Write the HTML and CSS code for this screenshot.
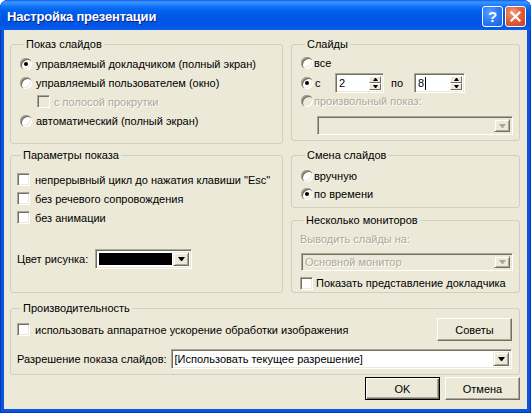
FILE: index.html
```html
<!DOCTYPE html>
<html lang="ru">
<head>
<meta charset="utf-8">
<title>Настройка презентации</title>
<link rel="stylesheet" href="styles.css">
</head>
<body>
<div class="window">
  <header class="titlebar">
    <h1 class="title">Настройка презентации</h1>
    <div class="caption-buttons">
      <span class="cap-btn cap-help">?</span>
      <span class="cap-btn cap-close"><svg width="13" height="13" viewBox="0 0 13 13"><path d="M2.5 2.5 L10.5 10.5 M10.5 2.5 L2.5 10.5" stroke="#fff" stroke-width="2.2" stroke-linecap="square"/></svg></span>
    </div>
  </header>

  <main class="client">
    <div class="panes">
      <div class="pane">
        <fieldset class="group g-show">
          <legend>Показ слайдов</legend>
          <div class="row"><span class="radio on"></span><span>управляемый докладчиком (полный экран)</span></div>
          <div class="row"><span class="radio"></span><span>управляемый пользователем (окно)</span></div>
          <div class="row sub disabled"><span class="check"></span><span>с полосой прокрутки</span></div>
          <div class="row"><span class="radio"></span><span>автоматический (полный экран)</span></div>
        </fieldset>

        <fieldset class="group g-opts">
          <legend>Параметры показа</legend>
          <div class="row"><span class="check"></span><span>непрерывный цикл до нажатия клавиши "Esc"</span></div>
          <div class="row"><span class="check"></span><span>без речевого сопровождения</span></div>
          <div class="row"><span class="check"></span><span>без анимации</span></div>
          <div class="color-row">
            <span>Цвет рисунка:</span>
            <div class="field combo combo-color"><span class="swatch"></span><span class="drop"><i class="tri"></i></span></div>
          </div>
        </fieldset>
      </div>

      <div class="pane">
        <fieldset class="group g-slides">
          <legend>Слайды</legend>
          <div class="row"><span class="radio"></span><span>все</span></div>
          <div class="row range-row">
            <span class="radio on"></span><span class="from">с</span>
            <div class="field spin spin-from"><span class="value">2</span><span class="arrows"><span class="arr"><i class="up"></i></span><span class="arr"><i class="dn"></i></span></span></div>
            <span class="to">по</span>
            <div class="field spin spin-to"><span class="value">8<span class="caret"></span></span><span class="arrows"><span class="arr"><i class="up"></i></span><span class="arr"><i class="dn"></i></span></span></div>
          </div>
          <div class="row disabled short"><span class="radio"></span><span>произвольный показ:</span></div>
          <div class="field combo combo-off combo-custom"><span class="text"></span><span class="drop"><i class="tri"></i></span></div>
        </fieldset>

        <fieldset class="group g-advance">
          <legend>Смена слайдов</legend>
          <div class="row"><span class="radio"></span><span>вручную</span></div>
          <div class="row"><span class="radio on"></span><span>по времени</span></div>
        </fieldset>

        <fieldset class="group g-monitors">
          <legend>Несколько мониторов</legend>
          <div class="caption disabled">Выводить слайды на:</div>
          <div class="field combo combo-off combo-monitor"><span class="text">Основной монитор</span><span class="drop"><i class="tri"></i></span></div>
          <div class="row"><span class="check"></span><span>Показать представление докладчика</span></div>
        </fieldset>
      </div>
    </div>

    <fieldset class="group g-perf">
      <legend>Производительность</legend>
      <div class="perf-row">
        <div class="row"><span class="check"></span><span>использовать аппаратное ускорение обработки изображения</span></div>
        <button class="btn btn-tips">Советы</button>
      </div>
      <div class="res-row">
        <span>Разрешение показа слайдов:</span>
        <div class="field combo combo-res"><span class="text">[Использовать текущее разрешение]</span><span class="drop"><i class="tri"></i></span></div>
      </div>
    </fieldset>

    <div class="actions">
      <button class="btn btn-default">OK</button>
      <button class="btn">Отмена</button>
    </div>
  </main>
</div>
</body>
</html>
```

FILE: styles.css
```css
* { box-sizing: border-box; }

html, body {
  margin: 0;
  padding: 0;
  background: #fff;
}

body {
  font-family: "Liberation Sans", Arial, sans-serif;
  font-size: 11px;
  color: #000;
}

/* ---------- window frame ---------- */
.window {
  width: 531px;
  height: 413px;
  background: #0A55E0;
  border-radius: 8px 8px 0 0;
  box-shadow: inset 1px 0 #0736B8, inset -1px 0 #0736B8, inset 0 -1px #0736B8;
  display: flex;
  flex-direction: column;
  overflow: hidden;
}

.titlebar {
  height: 30px;
  flex: none;
  display: flex;
  align-items: center;
  justify-content: space-between;
  padding: 0 5px 0 7px;
  border-radius: 8px 8px 0 0;
  background: linear-gradient(180deg,
    #0A5EE6 0, #3D95FF 2px, #2B88FB 4px, #0E70F6 7px, #0062EF 11px,
    #0058E6 17px, #0054E3 23px, #0057E8 27px, #0A5FEE 30px);
}

.title {
  margin: 0;
  font-family: "Liberation Sans", Arial, sans-serif;
  font-size: 13px;
  font-weight: bold;
  color: #fff;
  text-shadow: 1px 1px 0 #0A1E8C;
  padding-top: 2px;
  letter-spacing: -0.2px;
}

.caption-buttons {
  display: flex;
  gap: 2px;
  padding-top: 2px;
}

.cap-btn {
  width: 21px;
  height: 21px;
  border: 1px solid #fff;
  border-radius: 3px;
  display: flex;
  align-items: center;
  justify-content: center;
}

.cap-help {
  background: radial-gradient(circle at 35% 30%, #5CA0FF 0, #2F7DF6 45%, #1A5FE0 100%);
  color: #fff;
  font-weight: bold;
  font-size: 15px;
  font-family: "Liberation Sans", Arial, sans-serif;
  line-height: 1;
}

.cap-close {
  background: radial-gradient(circle at 35% 30%, #F3A08A 0, #E2603A 45%, #C8421C 100%);
}

/* ---------- client area ---------- */
.client {
  flex: 1;
  margin: 0 4px 4px;
  background: #ECE9D8;
  padding: 8px 7px 0 6px;
  display: flex;
  flex-direction: column;
}

.panes {
  display: grid;
  grid-template-columns: 273px 229px;
  column-gap: 8px;
}

.pane {
  display: flex;
  flex-direction: column;
}

/* ---------- group boxes ---------- */
.group {
  margin: 0;
  min-width: 0;
  padding: 0;
  border: 1px solid #D0D0BF;
  border-radius: 3px;
}

.group legend {
  margin-left: 4px;
  padding: 0 2px;
  line-height: 13px;
  height: 13px;
}

.g-show { height: 106px; padding: 3px 0 0 9px; }
.g-opts { height: 144px; margin-top: 5px; padding: 8px 0 0 6px; }

.g-slides { height: 103px; padding: 3px 0 0 9px; }
.g-advance { height: 59px; margin-top: 8px; padding: 5px 0 0 9px; }
.g-monitors { height: 79px; margin-top: 6px; padding: 5px 0 0 8px; }

.g-perf { height: 73px; margin-top: 9px; padding: 2px 7px 0 6px; }

/* ---------- rows ---------- */
.row {
  display: flex;
  align-items: center;
  height: 19px;
  white-space: nowrap;
}

.g-show .row { gap: 4px; }
.g-show .row.sub { padding-left: 17px; gap: 4px; }
.g-opts .row { gap: 5px; }
.g-slides .row { gap: 1px; height: 18px; }
.g-slides .range-row { height: 22px; }
.g-slides .row.short { height: 13px; }
.g-advance .row { gap: 1px; height: 18px; }
.g-monitors .row { gap: 3px; height: 16px; margin-top: 4px; }

.disabled { color: #ACA899; text-shadow: 1px 1px 0 #fff; }

/* classic radio button */
.radio {
  flex: none;
  position: relative;
  width: 12px;
  height: 12px;
  border-radius: 50%;
  background: #fff;
  box-shadow:
    inset 1px 1px 0 #ACA899,
    inset 2px 2px 0 #716F64,
    inset -1px -1px 0 #fff,
    inset -2px -2px 0 #ECE9D8;
}
.radio.on::after {
  content: "";
  position: absolute;
  left: 4px;
  top: 4px;
  width: 4px;
  height: 4px;
  border-radius: 50%;
  background: #000;
}
.disabled .radio { background: #ECE9D8; }

/* classic check box */
.check {
  flex: none;
  width: 13px;
  height: 13px;
  background: #fff;
  border: 1px solid;
  border-color: #ACA899 #fff #fff #ACA899;
  box-shadow: inset 1px 1px 0 #716F64, inset -1px -1px 0 #ECE9D8;
}
.disabled .check { background: #ECE9D8; }

/* sunken field */
.field {
  display: flex;
  background: #fff;
  border: 1px solid;
  border-color: #ACA899 #fff #fff #ACA899;
  box-shadow: inset 1px 1px 0 #716F64, inset -1px -1px 0 #ECE9D8;
  padding: 2px;
}

.combo .text {
  flex: 1;
  display: flex;
  align-items: center;
  padding-left: 1px;
  white-space: nowrap;
  overflow: hidden;
}

.drop {
  flex: none;
  width: 16px;
  display: flex;
  align-items: center;
  justify-content: center;
  background: #ECE9D8;
  border: 1px solid;
  border-color: #ECE9D8 #716F64 #716F64 #ECE9D8;
  box-shadow: inset 1px 1px 0 #fff, inset -1px -1px 0 #ACA899;
}

.tri {
  display: block;
  width: 1px;
  height: 0;
  border-top: 4px solid #000;
  border-left: 3px solid transparent;
  border-right: 3px solid transparent;
  box-sizing: content-box;
}

.combo-off { background: #ECE9D8; }
.combo-off .text { color: #ACA899; text-shadow: 1px 1px 0 #fff; }
.combo-off .tri { border-top-color: #ACA899; }

.combo-custom { width: 196px; height: 19px; margin: 9px 0 0 16px; }
.combo-monitor { width: 212px; height: 18px; margin-top: 7px; margin-left: 1px; }

/* colour picker combo */
.color-row {
  display: flex;
  align-items: center;
  gap: 7px;
  margin-top: 22px;
}
.combo-color { width: 97px; height: 20px; }
.swatch {
  flex: 1;
  margin: 1px 1px 1px 1px;
  background: #000;
}

/* spin boxes */
.range-row .from { margin-left: 1px; width: 19px; }
.range-row .to { margin: 0 10px 0 6px; }
.spin { height: 20px; padding: 2px 2px 2px 3px; }
.spin-from { width: 49px; }
.spin-to { width: 51px; }
.spin .value {
  flex: 1;
  display: flex;
  align-items: center;
  line-height: 1;
}
.caret {
  display: inline-block;
  width: 1px;
  height: 13px;
  background: #000;
  margin-left: 1px;
}
.arrows {
  flex: none;
  width: 12px;
  display: flex;
  flex-direction: column;
}
.arr {
  flex: 1;
  display: flex;
  align-items: center;
  justify-content: center;
  background: #ECE9D8;
  border: 1px solid;
  border-color: #fff #716F64 #716F64 #fff;
}
.arr .up, .arr .dn {
  display: block;
  width: 1px;
  height: 0;
  border-left: 2px solid transparent;
  border-right: 2px solid transparent;
  box-sizing: content-box;
}
.arr .up { border-bottom: 3px solid #000; }
.arr .dn { border-top: 3px solid #000; }

.g-monitors .caption { height: 14px; line-height: 14px; padding-left: 0; }

/* performance group */
.perf-row {
  display: flex;
  align-items: center;
  justify-content: space-between;
  height: 25px;
}
.g-perf .perf-row .row { gap: 5px; }

.res-row {
  display: flex;
  align-items: center;
  gap: 4px;
  margin-top: 7px;
}
.combo-res { flex: 1; height: 20px; }

/* push buttons */
.btn {
  font: inherit;
  color: #000;
  width: 75px;
  height: 23px;
  padding: 0;
  background: #ECE9D8;
  border: 1px solid;
  border-color: #fff #716F64 #716F64 #fff;
  box-shadow: inset -1px -1px 0 #ACA899;
}
.btn-default {
  border: 1px solid #000;
  box-shadow: inset 1px 1px 0 #fff, inset -1px -1px 0 #716F64, inset -2px -2px 0 #ACA899;
}

.actions {
  display: flex;
  justify-content: flex-end;
  gap: 5px;
  margin-top: 2px;
}
```
